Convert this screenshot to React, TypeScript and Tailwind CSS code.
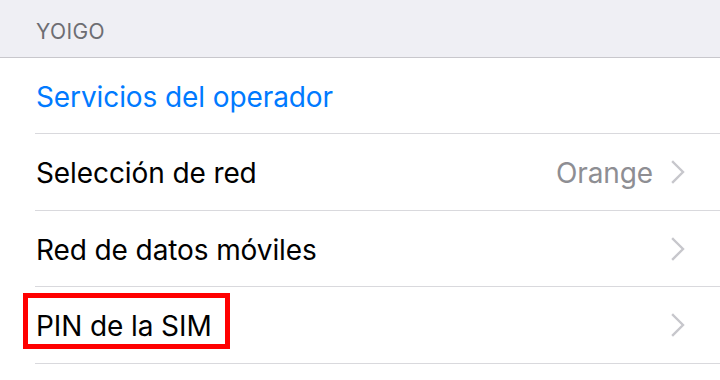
import React from "react";

const Chevron = () => (
  <svg width="14" height="24" viewBox="0 0 14 24" className="shrink-0">
    <path d="M2 2 L12 12 L2 22" fill="none" stroke="#c7c7cc" strokeWidth="2.4" strokeLinecap="square" strokeLinejoin="miter" />
  </svg>
);

function Row({ label, value, blue, chevron, h, boxed }: { label: string; value?: string; blue?: boolean; chevron?: boolean; h: string; boxed?: boolean }) {
  return (
    <div className={`relative flex items-center pl-[36px] pr-[35px] ${h}`}>
      <span className={`text-[28px] leading-none tracking-[-0.1px] pt-[2px] ${blue ? "text-[#007aff]" : "text-black"}`}>{label}</span>
      <div className="flex-1" />
      {value && <span className="text-[28px] leading-none text-[#8e8e93] mr-[18px] tracking-[-0.1px] pt-[2px]">{value}</span>}
      {chevron && <Chevron />}
      {boxed && <div className="absolute left-[23px] top-[6px] w-[207px] h-[56px] border-[5px] border-[#ff0000]" />}
    </div>
  );
}

export default function App() {
  return (
    <div className="w-[720px] h-[380px] bg-white overflow-hidden" style={{ fontFamily: "Inter, 'Noto Sans', sans-serif" }}>
      <div className="h-[57px] bg-[#efeff4] flex items-end pl-[36px] pb-[15px]">
        <span className="text-[21px] leading-none text-[#6d6d72] tracking-[0.4px]">YOIGO</span>
      </div>
      <div className="h-px bg-[#c8c7cc]" />
      <Row label="Servicios del operador" blue h="h-[75px]" />
      <div className="ml-[35px] h-px bg-[#d9d9dd]" />
      <Row label="Selección de red" value="Orange" chevron h="h-[76px]" />
      <div className="ml-[35px] h-px bg-[#d9d9dd]" />
      <Row label="Red de datos móviles" chevron h="h-[75px]" />
      <div className="ml-[35px] h-px bg-[#d9d9dd]" />
      <Row label="PIN de la SIM" chevron h="h-[76px]" boxed />
      <div className="ml-[35px] h-px bg-[#d9d9dd]" />
    </div>
  );
}
